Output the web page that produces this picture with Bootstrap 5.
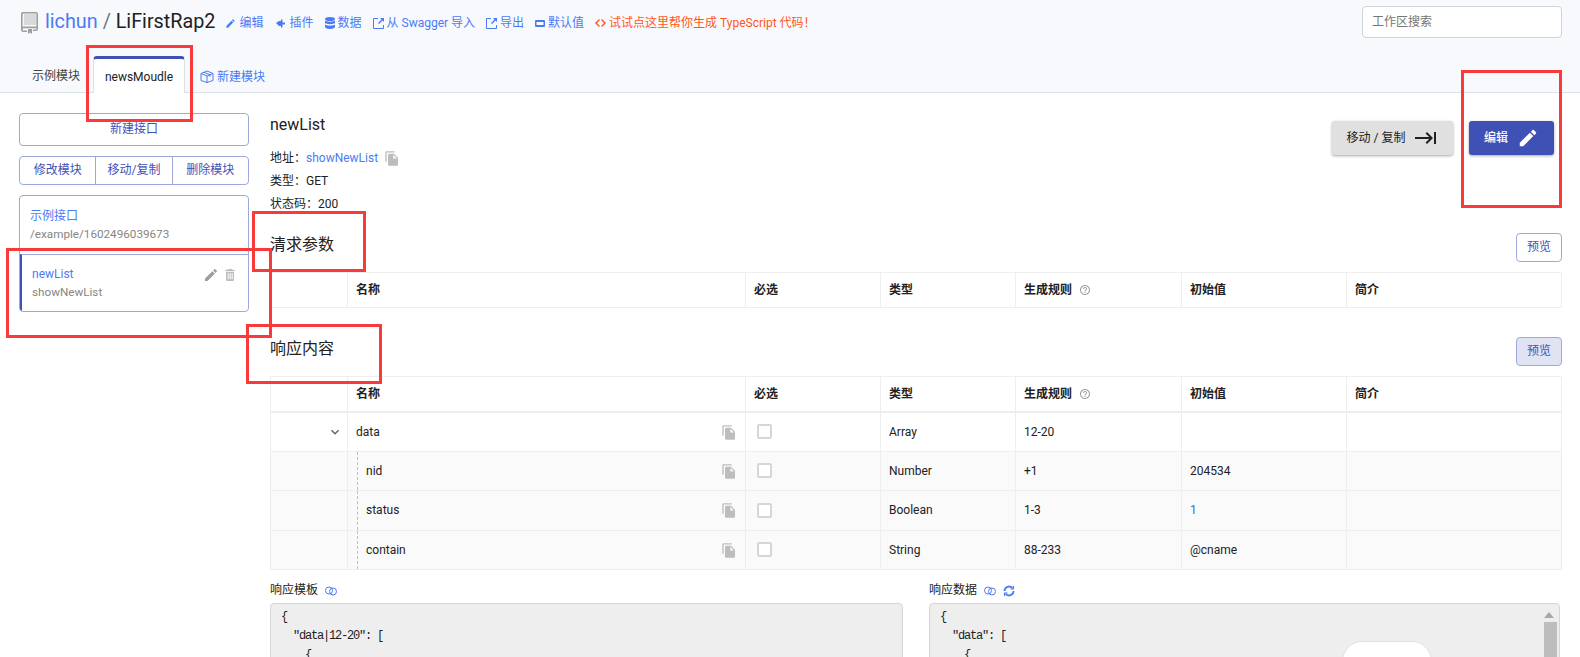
<!DOCTYPE html>
<html lang="en">
<head>
  <meta charset="UTF-8" />
  <meta name="viewport" content="width=device-width, initial-scale=1" />
  <title>LiFirstRap2</title>
  <link href="https://cdn.jsdelivr.net/npm/bootstrap@5.3.0/dist/css/bootstrap.min.css" rel="stylesheet" />
  <style>
    html, body { height: 657px; overflow: hidden; }
    body {
      position: relative;
      background: #fff;
      color: #212121;
      font-family: Roboto, "Noto Sans CJK SC", sans-serif;
      font-size: 12px;
    }
    a { color: #4a7bf7; text-decoration: none; }
    svg { flex: none; }
    svg:not([fill]) { fill: currentColor; }

    /* header */
    .top-head { background: #f8f9fc; border-bottom: 1px solid #dde1e8; height: 93px; padding: 0 18px 0 21px; }
    .title-row { height: 56px; padding-bottom: 10px; }
    .repo-title { font-size: 19.8px; margin: -2px 10px 0 7px; color: #212121; font-weight: 400; white-space: nowrap; }
    .repo-title a { color: #4a7bf7; }
    .book-ico { color: #9e9e9e; }
    .head-link { display: inline-flex; align-items: center; gap: 3px; margin-right: 11px; white-space: nowrap; }
    .head-link.warn { color: #ff5722; }
    .search-box {
      width: 200px; height: 32px; font-size: 12px; border-radius: 4px;
      border: 1px solid #ced4da; margin-top: -3px; padding: 0 9px;
    }
    .search-box::placeholder { color: #757575; }
    .tab-row { height: 37px; padding-left: 11px; }
    .mod-tab { padding: 0 14px 0 0; line-height: 41px; color: #424242; }
    .mod-tab.on {
      width: 92px; margin-left: -1px; padding: 0; text-align: center; color: #212121; background: #fff;
      border: 1px solid #dde1e8; border-top: 3px solid #3f51b5; border-bottom: 0;
      border-radius: 4px 4px 0 0; height: 37px; line-height: 37px;
    }
    .mod-add { display: inline-flex; align-items: center; gap: 3px; margin-left: 15px; height: 41px; }

    /* sidebar */
    .page-body { padding: 20px 18px 0 19px; }
    .side-col { width: 230px; flex: none; margin-right: 21px; }
    .line-btn {
      display: block; width: 100%; height: 33px; line-height: 31px; text-align: center; color: #3f51b5;
      background: #fff; border: 1px solid #9fa8da; border-radius: 4px; padding: 0; font-size: 12px;
    }
    .mod-btns { display: flex; height: 29px; margin-top: 10px; border: 1px solid #9fa8da; border-radius: 4px; }
    .mod-btns span { flex: 1 1 0; text-align: center; line-height: 27px; color: #3f51b5; border-left: 1px solid #9fa8da; }
    .mod-btns span:first-child { border-left: 0; }
    .api-list { margin-top: 10px; border: 1px solid #9fa8da; border-radius: 4px; overflow: hidden; }
    .api-item { height: 58px; padding: 11px 10px 0; line-height: 18px; }
    .api-item + .api-item { border-top: 1px solid #9fa8da; }
    .api-item.on { border-left: 2px solid #3f51b5; position: relative; height: 57px; padding-top: 10px; }
    .api-item small { display: block; color: #858585; font-size: 11.7px; }
    .api-tools { color: #9e9e9e; top: 12px; right: 10px; gap: 3px; }
    .api-tools svg + svg { color: #bdbdbd; }

    /* main */
    .main-col { flex: 1 1 auto; min-width: 0; }
    .api-name { font-size: 16px; font-weight: 400; margin: 0; line-height: 24px; }
    .api-meta { line-height: 23px; margin-top: 10px; height: 76px; }
    .copy-ico { color: #bdbdbd; margin-left: 6px; }
    .action-btns { padding: 8px 8px 0 0; }
    .raised-btn {
      display: inline-flex; align-items: center; justify-content: center; height: 34px; border-radius: 3px;
      font-size: 12px; border: 0; box-shadow: 0 1px 3px rgba(0,0,0,.35);
    }
    .move-btn { width: 121px; background: #e0e0e0; color: #212121; gap: 9px; }
    .edit-btn { width: 85px; background: #3f51b5; color: #fff; gap: 9px; font-weight: 500; margin-left: 16px; }
    .sec-head { height: 49px; align-items: center; }
    .sec-head h5 { font-size: 16px; font-weight: 400; margin: 0; padding-bottom: 5px; }
    .view-btn {
      width: 46px; height: 29px; line-height: 27px; text-align: center; font-size: 12px; color: #3f51b5;
      border: 1px solid #9fa8da; border-radius: 4px; background: #fff;
    }
    .view-btn.on { background: #e0e3f4; }

    .prop-table { table-layout: fixed; width: 100%; border-collapse: collapse; margin: 0; font-size: 12px; }
    .prop-table th, .prop-table td { border: 1px solid #eee; padding: 0 8px; vertical-align: middle; }
    .prop-table th { height: 35px; font-weight: 700; color: #212121; }
    .prop-table thead.heavy th { border-bottom-width: 2px; }
    .prop-table td { height: 39.5px; color: #212121; }
    .prop-table tbody tr.sub td { background: #fafafa; }
    .prop-table td.name-cell { position: relative; }
    .prop-table tr.sub td.name-cell { padding-left: 18px; }
    .prop-table tr.sub td.name-cell::before {
      content: ""; position: absolute; left: 9px; top: 0; bottom: 0; border-left: 1px dashed #bdbdbd;
    }
    .cell-copy { color: #bdbdbd; position: absolute; right: 8px; top: 50%; margin-top: -8px; }
    .fake-check { display: block; width: 15px; height: 15px; margin-left: 3px; background: #fff; border: 2px solid #d6d6d6; border-radius: 2px; }
    .val-num { color: #1976d2; }
    .help-ico { color: #9e9e9e; margin-left: 4px; vertical-align: -2px; }
    .gap-sec { height: 19px; }

    /* code */
    .code-row { margin-top: 12px; gap: 26px; }
    .code-col { flex: 0 0 633px; min-width: 0; }
    .code-col.wide { flex: 0 0 631px; }
    .code-label { height: 17px; line-height: 17px; display: flex; align-items: center; gap: 6px; }
    .code-label a { display: inline-flex; }
    .code-pane {
      position: relative; height: 80px; overflow: hidden; background: #eee; border: 1px solid #d6d6d6;
      border-radius: 4px; margin-top: 4px; padding: 4px 10px;
      font-family: "Liberation Mono", monospace; font-size: 12px; letter-spacing: -1.2px; line-height: 19px;
      white-space: pre;
    }
    .scroll-up { position: absolute; right: 5px; top: 8px; width: 0; height: 0; border: 5px solid transparent; border-top: 0; border-bottom: 6px solid #a8a8a8; }
    .scroll-thumb { position: absolute; right: 2px; top: 18px; bottom: 0; width: 13px; background: #bdbdbd; }
    .float-pill {
      position: absolute; left: 412px; top: 37px; width: 90px; height: 60px; background: #fff;
      border: 1px solid #e0e0e0; border-radius: 20px;
    }

    /* red review marks on top of the screenshot */
    .mark-box { position: absolute; border: 3px solid #f93a3a; pointer-events: none; }
    .mark-tab { left: 86px; top: 45px; width: 107px; height: 77px; }
    .mark-item { left: 6px; top: 248px; width: 266px; height: 90px; }
    .mark-req { left: 252px; top: 211px; width: 114px; height: 61px; }
    .mark-res { left: 246px; top: 324px; width: 136px; height: 60px; }
    .mark-edit { left: 1461px; top: 70px; width: 101px; height: 138px; }
  </style>
</head>
<body>
  <!-- top bar -->
  <header class="top-head">
    <div class="title-row d-flex align-items-center">
      <svg class="book-ico" width="17" height="22" viewBox="0 0 17 22"><path d="M2 0h13a2 2 0 0 1 2 2v15a2 2 0 0 1-2 2h-3v-1.600h3.400V1.600H2.800A1.200 1.200 0 0 0 1.600 2.800v12.100c.4-.2.8-.3 1.200-.3h12.600v1.600H2.800a1.200 1.200 0 0 0 0 2.400H6V20H2.500A2.500 2.500 0 0 1 0 17.500V2a2 2 0 0 1 2-2z"/><path d="M7 17h4v5l-2-1.400L7 22z"/><path d="M3 2h12v11H3z" opacity=".35"/></svg>
      <h1 class="repo-title"><a href="#">lichun</a> <span class="text-secondary">/</span> LiFirstRap2</h1>
      <a class="head-link" href="#"><svg width="11" height="11" viewBox="0 0 24 24"><path d="M3 17.250V21h3.750L17.810 9.940l-3.750-3.750L3 17.250zM20.710 7.040c.39-.39.39-1.020 0-1.410l-2.340-2.340c-.39-.39-1.020-.39-1.410 0l-1.830 1.830 3.750 3.750 1.830-1.830z"/></svg>编辑</a>
      <a class="head-link" href="#"><svg width="12" height="11" viewBox="0 0 12 11"><path d="M1 5l3-2h2V1l1.500 1v2.500H10v2H7.500V9L6 10V8H4z"/></svg>插件</a>
      <a class="head-link" href="#"><svg width="10" height="12" viewBox="0 0 10 12"><ellipse cx="5" cy="2" rx="5" ry="2"/><path d="M0 3.500C1 5 9 5 10 3.500V6C9 7.500 1 7.500 0 6zM0 7.500C1 9 9 9 10 7.500V10c-.5 2.600-9.500 2.600-10 0z"/></svg>数据</a>
      <a class="head-link" href="#"><svg width="11" height="11" viewBox="0 0 11 11"><path d="M1 0h4v1H1v9h9V7h1v3a1 1 0 0 1-1 1H1a1 1 0 0 1-1-1V1a1 1 0 0 1 1-1zM7 0h4v4L9.500 2.500 6 6 5 5l3.500-3.500z"/></svg>从 Swagger 导入</a>
      <a class="head-link" href="#"><svg width="11" height="11" viewBox="0 0 11 11"><path d="M1 0h4v1H1v9h9V7h1v3a1 1 0 0 1-1 1H1a1 1 0 0 1-1-1V1a1 1 0 0 1 1-1zM7 0h4v4L9.500 2.500 6 6 5 5l3.500-3.500z"/></svg>导出</a>
      <a class="head-link" href="#"><svg width="10" height="7" viewBox="0 0 10 7"><path d="M1 0h8a1 1 0 0 1 1 1v5a1 1 0 0 1-1 1H1a1 1 0 0 1-1-1V1a1 1 0 0 1 1-1zm.5 2v3h7V2z"/></svg>默认值</a>
      <a class="head-link warn" href="#"><svg width="11" height="10" viewBox="0 0 11 10"><path d="M4 1L0 5l4 4 1-1-3-3 3-3zM7 1L6 2l3 3-3 3 1 1 4-4z"/></svg>试试点这里帮你生成 TypeScript 代码！</a>
      <input class="search-box form-control ms-auto" type="text" placeholder="工作区搜索" />
    </div>
    <div class="tab-row d-flex align-items-stretch">
      <span class="mod-tab">示例模块</span>
      <span class="mod-tab on">newsMoudle</span>
      <a class="mod-add" href="#"><svg width="14" height="13" viewBox="0 0 14 13" fill="none" stroke="currentColor"><path d="M1 3.500L7 1l6 2.500v7L7 12.500l-6-2zM1 3.500L7 6l6-2.500M7 6v6.500M4 2.300l6 2.500v2"/></svg>新建模块</a>
    </div>
  </header>

  <div class="page-body d-flex">
    <!-- modules and interfaces -->
    <aside class="side-col">
      <button class="line-btn" type="button">新建接口</button>
      <div class="mod-btns"><span>修改模块</span><span>移动/复制</span><span>删除模块</span></div>
      <div class="api-list">
        <div class="api-item"><a href="#">示例接口</a><small>/example/1602496039673</small></div>
        <div class="api-item on">
          <a href="#">newList</a><small>showNewList</small>
          <div class="api-tools position-absolute d-flex">
            <svg width="16" height="16" viewBox="0 0 24 24"><path d="M3 17.250V21h3.750L17.810 9.940l-3.750-3.750L3 17.250zM20.710 7.040c.39-.39.39-1.020 0-1.410l-2.340-2.340c-.39-.39-1.020-.39-1.410 0l-1.830 1.830 3.750 3.750 1.830-1.830z"/></svg>
            <svg width="16" height="16" viewBox="0 0 24 24"><path d="M6 19c0 1.100.9 2 2 2h8c1.100 0 2-.9 2-2V7H6v12zm2.500-9.500h1.500v9H8.500zm3 0H13v9h-1.500zm3 0H16v9h-1.500zM19 4h-3.500l-1-1h-5l-1 1H5v2h14V4z" fill-rule="evenodd"/></svg>
          </div>
        </div>
      </div>
    </aside>

    <main class="main-col">
      <div class="d-flex justify-content-between">
        <div>
          <h2 class="api-name">newList</h2>
          <div class="api-meta">
            <div class="d-flex align-items-center">地址：<a href="#">showNewList</a>
              <svg class="copy-ico" width="16" height="17" viewBox="0 0 24 24"><path d="M16 1H4c-1.100 0-2 .9-2 2v14h2V3h12V1zm-1 4l6 6v10c0 1.100-.9 2-2 2H7.990C6.890 23 6 22.100 6 21l.01-14c0-1.100.89-2 1.990-2h7zm-1 7h5.500L14 6.500V12z"/></svg>
            </div>
            <div>类型：GET</div>
            <div>状态码：200</div>
          </div>
        </div>
        <div class="action-btns d-flex align-items-start">
          <button class="raised-btn move-btn" type="button">移动 / 复制
            <svg width="24" height="24" viewBox="0 0 24 24"><path d="M11.590 7.410L15.170 11H1v2h14.170l-3.590 3.590L13 18l6-6-6-6-1.410 1.410zM20 6v12h2V6h-2z"/></svg>
          </button>
          <button class="raised-btn edit-btn" type="button">编辑
            <svg width="22" height="22" viewBox="0 0 24 24"><path d="M3 17.250V21h3.750L17.810 9.940l-3.750-3.750L3 17.250zM20.710 7.040c.39-.39.39-1.020 0-1.410l-2.340-2.340c-.39-.39-1.020-.39-1.410 0l-1.830 1.830 3.750 3.750 1.830-1.830z"/></svg>
          </button>
        </div>
      </div>

      <!-- request params -->
      <div class="sec-head d-flex justify-content-between"><h5>清求参数</h5><span class="view-btn">预览</span></div>
      <table class="prop-table">
        <colgroup><col style="width:77px"><col style="width:398px"><col style="width:135px"><col style="width:135px"><col style="width:166px"><col style="width:165px"><col></colgroup>
        <thead><tr><th></th><th>名称</th><th>必选</th><th>类型</th><th>生成规则 <svg class="help-ico" width="12" height="12" viewBox="0 0 24 24"><path d="M11 18h2v-2h-2v2zm1-16C6.480 2 2 6.480 2 12s4.480 10 10 10 10-4.480 10-10S17.520 2 12 2zm0 18c-4.410 0-8-3.590-8-8s3.590-8 8-8 8 3.590 8 8-3.590 8-8 8zm0-14c-2.210 0-4 1.790-4 4h2c0-1.100.9-2 2-2s2 .9 2 2c0 2-3 1.750-3 5h2c0-2.250 3-2.500 3-5 0-2.210-1.790-4-4-4z"/></svg></th><th>初始值</th><th>简介</th></tr></thead>
      </table>
      <div class="gap-sec"></div>

      <!-- response -->
      <div class="sec-head d-flex justify-content-between"><h5>响应内容</h5><span class="view-btn on">预览</span></div>
      <table class="prop-table">
        <colgroup><col style="width:77px"><col style="width:398px"><col style="width:135px"><col style="width:135px"><col style="width:166px"><col style="width:165px"><col></colgroup>
        <thead class="heavy"><tr><th></th><th>名称</th><th>必选</th><th>类型</th><th>生成规则 <svg class="help-ico" width="12" height="12" viewBox="0 0 24 24"><path d="M11 18h2v-2h-2v2zm1-16C6.480 2 2 6.480 2 12s4.480 10 10 10 10-4.480 10-10S17.520 2 12 2zm0 18c-4.410 0-8-3.590-8-8s3.590-8 8-8 8 3.590 8 8-3.590 8-8 8zm0-14c-2.210 0-4 1.790-4 4h2c0-1.100.9-2 2-2s2 .9 2 2c0 2-3 1.750-3 5h2c0-2.250 3-2.500 3-5 0-2.210-1.790-4-4-4z"/></svg></th><th>初始值</th><th>简介</th></tr></thead>
        <tbody id="propRows"></tbody>
      </table>

      <div class="code-row d-flex">
        <div class="code-col">
          <div class="code-label">响应模板 <a href="#"><svg width="14" height="10" viewBox="0 0 14 10" fill="none" stroke="currentColor"><circle cx="5" cy="4.500" r="3.500"/><circle cx="9" cy="5.500" r="3.500"/></svg></a></div>
          <div class="code-pane">{
  "data|12-20": [
    {</div>
        </div>
        <div class="code-col wide">
          <div class="code-label">响应数据 <a href="#"><svg width="14" height="10" viewBox="0 0 14 10" fill="none" stroke="currentColor"><circle cx="5" cy="4.500" r="3.500"/><circle cx="9" cy="5.500" r="3.500"/></svg></a>
            <a href="#"><svg width="12" height="12" viewBox="0 0 12 12" fill="none" stroke="currentColor" stroke-width="1.800"><path d="M1.500 6a4.500 4.500 0 0 1 8-2.800M10.500 6a4.500 4.500 0 0 1-8 2.800"/><path d="M10.500 1v3H7.500M1.500 11V8h3" stroke-width="1.200"/></svg></a></div>
          <div class="code-pane">{
  "data": [
    {<span class="float-pill"></span><span class="scroll-up"></span><span class="scroll-thumb"></span></div>
        </div>
      </div>
    </main>
  </div>

  <!-- review marks -->
  <div class="mark-box mark-tab"></div>
  <div class="mark-box mark-item"></div>
  <div class="mark-box mark-req"></div>
  <div class="mark-box mark-res"></div>
  <div class="mark-box mark-edit"></div>

  <script>
    const copyIcon = '<svg class="cell-copy" width="16" height="17" viewBox="0 0 24 24"><path d="M16 1H4c-1.100 0-2 .9-2 2v14h2V3h12V1zm-1 4l6 6v10c0 1.100-.9 2-2 2H7.990C6.890 23 6 22.100 6 21l.01-14c0-1.100.89-2 1.990-2h7zm-1 7h5.500L14 6.500V12z"/></svg>';
    const chevron = '<svg class="float-end" style="color:#616161;margin-right:-4px" width="16" height="16" viewBox="0 0 24 24"><path d="M7.410 8.590L12 13.170l4.590-4.580L18 10l-6 6-6-6z"/></svg>';
    const rows = [
      ['data', 'Array', '12-20', ''],
      ['nid', 'Number', '+1', '204534'],
      ['status', 'Boolean', '1-3', '<span class="val-num">1</span>'],
      ['contain', 'String', '88-233', '@cname']
    ];
    // first row is the parent, the rest hang under it
    document.getElementById('propRows').innerHTML = rows.map((r, i) =>
      `<tr class="${i ? 'sub' : ''}"><td>${i ? '' : chevron}</td>
        <td class="name-cell">${r[0]}${copyIcon}</td>
        <td><span class="fake-check"></span></td>
        <td>${r[1]}</td><td>${r[2]}</td><td>${r[3]}</td><td></td></tr>`
    ).join('');
  </script>
  <script src="https://cdn.jsdelivr.net/npm/bootstrap@5.3.0/dist/js/bootstrap.bundle.min.js"></script>
</body>
</html>
